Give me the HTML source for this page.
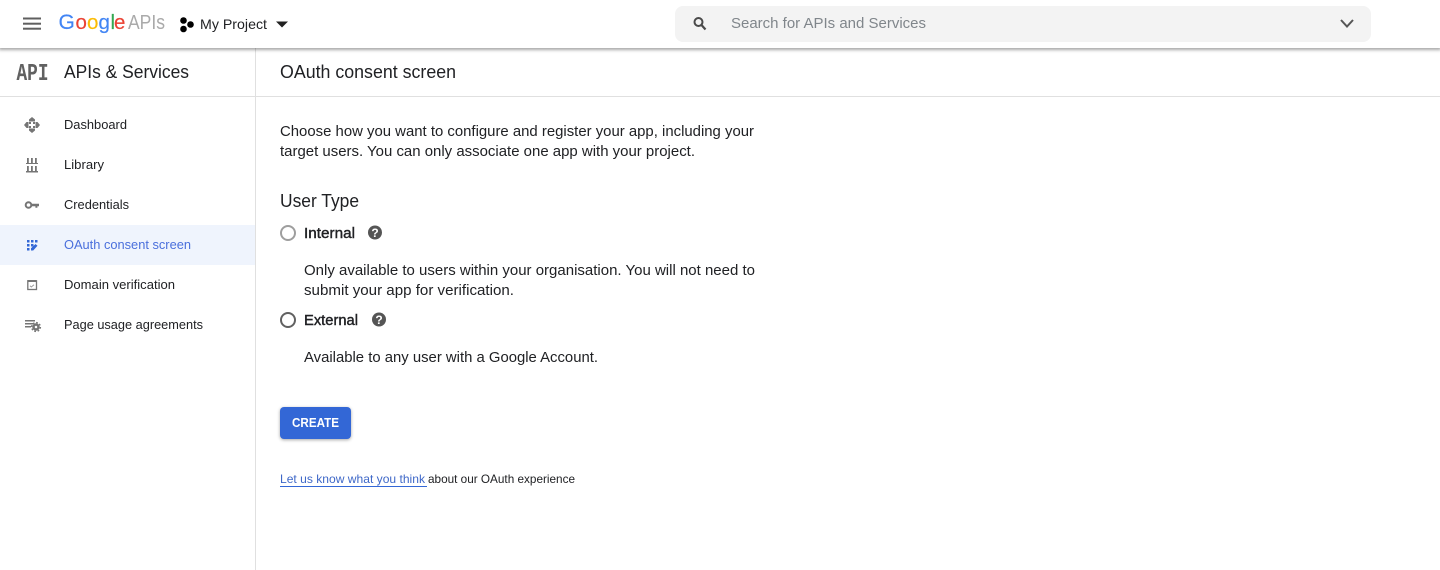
<!DOCTYPE html>
<html><head><meta charset="utf-8"><title>OAuth consent screen</title>
<style>
html,body{margin:0;padding:0;background:#fff;width:1440px;height:570px;overflow:hidden}
svg{display:block;position:absolute;left:0;top:0}
text{font-family:"Liberation Sans",sans-serif;fill:#202124}
#hd{position:absolute;left:0;top:0;width:1440px;height:48px;background:#fff;box-shadow:0 1px 3px 1px rgba(0,0,0,.35)}
#pg{position:absolute;left:0;top:0;width:1440px;height:570px}
</style></head><body>
<div id="pg">
<svg width="1440" height="570" viewBox="0 0 1440 570" xmlns="http://www.w3.org/2000/svg">
<rect x="0" y="225" width="255" height="40" fill="#eff4fd"/>
<rect x="255" y="48" width="1" height="522" fill="#e0e0e0"/>
<rect x="0" y="96" width="1440" height="1" fill="#e0e0e0"/>
<text x="16.500" y="80" font-size="24" font-weight="700" textLength="32" lengthAdjust="spacingAndGlyphs" style="font-family:'Liberation Mono',monospace;fill:#616161">API</text>
<text x="64" y="78" font-size="18" textLength="125" lengthAdjust="spacingAndGlyphs">APIs &amp; Services</text>
<text x="280" y="78" font-size="18" textLength="176" lengthAdjust="spacingAndGlyphs">OAuth consent screen</text>
<g font-size="13">
<text x="64" y="129" textLength="63" lengthAdjust="spacingAndGlyphs">Dashboard</text>
<text x="64" y="169" textLength="40" lengthAdjust="spacingAndGlyphs">Library</text>
<text x="64" y="209" textLength="65" lengthAdjust="spacingAndGlyphs">Credentials</text>
<text x="64" y="249" textLength="127" lengthAdjust="spacingAndGlyphs" style="fill:#4a6fdc">OAuth consent screen</text>
<text x="64" y="289" textLength="111" lengthAdjust="spacingAndGlyphs">Domain verification</text>
<text x="64" y="329" textLength="139" lengthAdjust="spacingAndGlyphs">Page usage agreements</text>
</g>
<!-- dashboard icon -->
<g fill="#757575">
<path d="M32 117l3 2.500v2h-6v-2zM32 133l3-2.500v-2h-6v2zM24 125l2.500-3h2v6h-2zM40 125l-2.500-3h-2v6h2z"/>
<rect x="29" y="122" width="2" height="2"/><rect x="33" y="122" width="2" height="2"/><rect x="29" y="126" width="2" height="2"/><rect x="33" y="126" width="2" height="2"/>
</g>
<!-- library icon -->
<g fill="#757575">
<rect x="27" y="158" width="1.800" height="5"/><rect x="31" y="158" width="1.800" height="5"/><rect x="35" y="158" width="1.800" height="5"/>
<rect x="26" y="163" width="12" height="1"/>
<rect x="27" y="166" width="1.800" height="5"/><rect x="31" y="166" width="1.800" height="5"/><rect x="35" y="166" width="1.800" height="5"/>
<rect x="26" y="171" width="12" height="1.500"/>
</g>
<!-- key icon -->
<circle cx="28.500" cy="205" r="2.800" fill="none" stroke="#757575" stroke-width="2"/>
<path d="M31 203.800h8v2.400h-1.600v1.600h-2v-1.600H31z" fill="#757575"/>
<!-- oauth icon -->
<g fill="#3367d6">
<rect x="27" y="240" width="2.500" height="2.500"/><rect x="31" y="240" width="2.500" height="2.500"/><rect x="35" y="240" width="2.500" height="2.500"/>
<rect x="27" y="244" width="2.500" height="2.500"/><rect x="31" y="244" width="2.500" height="2.500"/>
<rect x="27" y="248" width="2.500" height="2.500"/>
<path d="M31 250.500v-2.300l4.500-4.200 2 1.800-4.300 4.700z"/>
</g>
<!-- domain icon -->
<rect x="27.800" y="280.800" width="8.700" height="8.700" fill="none" stroke="#757575" stroke-width="1.300"/>
<rect x="27.500" y="280" width="9" height="2" fill="#757575"/>
<path d="M30 285.800l1.300 1.200 2.700-2.300" fill="none" stroke="#9a9a9a" stroke-width="1"/>
<!-- page usage icon -->
<g fill="#757575">
<rect x="25" y="320" width="10" height="1.500"/><rect x="25" y="323" width="8" height="1.500"/><rect x="25" y="326" width="6" height="1.500"/>
</g>
<circle cx="36" cy="327" r="2.500" fill="none" stroke="#757575" stroke-width="2.500"/>
<circle cx="36" cy="327" r="4.400" fill="none" stroke="#757575" stroke-width="1.400" stroke-dasharray="1.700 1.750"/>
<!-- main -->
<g font-size="14.500">
<text x="280" y="136" textLength="474" lengthAdjust="spacingAndGlyphs">Choose how you want to configure and register your app, including your</text>
<text x="280" y="156" textLength="415" lengthAdjust="spacingAndGlyphs">target users. You can only associate one app with your project.</text>
<text x="304" y="275" textLength="451" lengthAdjust="spacingAndGlyphs">Only available to users within your organisation. You will not need to</text>
<text x="304" y="295" textLength="210" lengthAdjust="spacingAndGlyphs">submit your app for verification.</text>
<text x="304" y="362" textLength="294" lengthAdjust="spacingAndGlyphs">Available to any user with a Google Account.</text>
<text x="304" y="238" stroke="#202124" stroke-width=".4" textLength="51" lengthAdjust="spacingAndGlyphs">Internal</text>
<text x="304" y="325" stroke="#202124" stroke-width=".4" textLength="54" lengthAdjust="spacingAndGlyphs">External</text>
</g>
<text x="280" y="207" font-size="18" textLength="79" lengthAdjust="spacingAndGlyphs">User Type</text>
<circle cx="288" cy="233" r="7" fill="#fff" stroke="#9e9e9e" stroke-width="2"/>
<circle cx="288" cy="320" r="7" fill="#fff" stroke="#616161" stroke-width="2"/>
<circle cx="375" cy="232.500" r="7" fill="#555"/>
<text x="375" y="237" font-size="12" font-weight="700" text-anchor="middle" style="fill:#fff">?</text>
<circle cx="379" cy="319.500" r="7" fill="#555"/>
<text x="379" y="324" font-size="12" font-weight="700" text-anchor="middle" style="fill:#fff">?</text>
<rect x="280" y="407" width="71" height="32" rx="4" fill="#3367d6" style="filter:drop-shadow(0 1px 1.500px rgba(0,0,0,.35))"/>
<text x="292" y="427" font-size="13" font-weight="700" textLength="47" lengthAdjust="spacingAndGlyphs" style="fill:#fff">CREATE</text>
<text x="280" y="483" font-size="12" textLength="145" lengthAdjust="spacingAndGlyphs" style="fill:#3f68c8">Let us know what you think</text>
<rect x="280" y="486" width="147" height="1" fill="#3367d6"/>
<text x="428" y="483" font-size="12" textLength="147" lengthAdjust="spacingAndGlyphs">about our OAuth experience</text>
</svg>
<div id="hd">
<svg width="1440" height="48" viewBox="0 0 1440 48" xmlns="http://www.w3.org/2000/svg">
<g fill="#5f5f5f"><rect x="23" y="17.500" width="18" height="2"/><rect x="23" y="22.700" width="18" height="2"/><rect x="23" y="27.700" width="18" height="2"/></g>
<g stroke-width=".15">
<text x="58.500" y="29" font-size="21" stroke="#4285f4" style="fill:#4285f4">G</text>
<text x="75.500" y="29" font-size="20.500" stroke="#ea4335" style="fill:#ea4335">o</text>
<text x="87" y="29" font-size="20.500" stroke="#fbbc05" style="fill:#fbbc05">o</text>
<text x="98.500" y="29" font-size="20.500" stroke="#4285f4" style="fill:#4285f4">g</text>
<text x="110.500" y="29" font-size="20.500" stroke="#34a853" style="fill:#34a853">l</text>
<text x="114" y="29" font-size="20.500" stroke="#ea4335" style="fill:#ea4335">e</text>
</g>
<text x="128" y="29" font-size="20" textLength="37" lengthAdjust="spacingAndGlyphs" style="fill:#aaa">APIs</text>
<g fill="#000"><circle cx="183.500" cy="20.500" r="3.300"/><circle cx="183.500" cy="29" r="3.300"/><circle cx="190.500" cy="24.500" r="3.300"/></g>
<text x="200" y="29" font-size="14" textLength="67" lengthAdjust="spacingAndGlyphs">My Project</text>
<path d="M276 21.500h12l-6 6z" fill="#212121"/>
<rect x="675" y="6" width="696" height="36" rx="8" fill="#f3f3f3"/>
<circle cx="698.500" cy="22" r="4" fill="none" stroke="#4a4a4a" stroke-width="2"/>
<path d="M701.500 25l4 4.500" stroke="#4a4a4a" stroke-width="2.200" fill="none"/>
<text x="731" y="28" font-size="14.500" textLength="195" lengthAdjust="spacingAndGlyphs" style="fill:#80868b">Search for APIs and Services</text>
<path d="M1341 20l6 6.500 6-6.500" fill="none" stroke="#555" stroke-width="2"/>
</svg>
</div>
</div>
</body></html>
